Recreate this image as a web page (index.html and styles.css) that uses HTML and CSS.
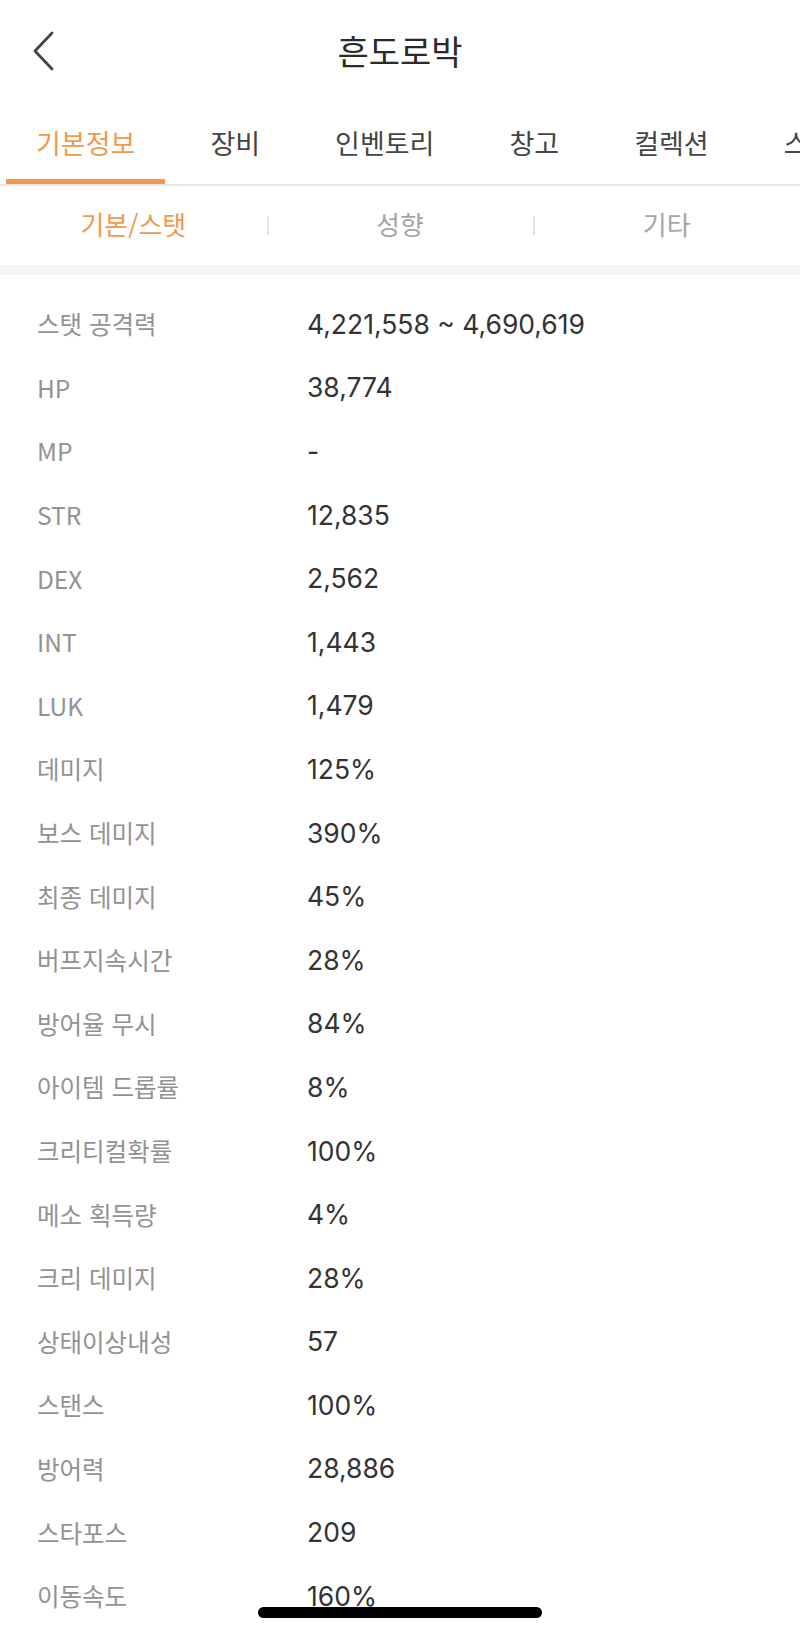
FILE: index.html
```html
<!DOCTYPE html>
<html lang="ko">
<head>
<meta charset="utf-8">
<title>흔도로박</title>
<link rel="stylesheet" href="styles.css">
</head>
<body>
<div class="page">
  <header class="topbar">
    <button class="back" aria-label="뒤로">
      <svg width="24" height="40" viewBox="0 0 24 40"><path d="M20 2 L3 20 L20 38" fill="none" stroke="#444" stroke-width="2.8" stroke-linecap="round" stroke-linejoin="round"/></svg>
    </button>
    <h1 class="title">흔도로박</h1>
  </header>

  <nav class="tabs">
    <span class="tab active">기본정보</span>
    <span class="tab">장비</span>
    <span class="tab">인벤토리</span>
    <span class="tab">창고</span>
    <span class="tab">컬렉션</span>
    <span class="tab">스킬</span>
  </nav>

  <div class="subtabs">
    <span class="subtab active">기본/스탯</span>
    <span class="subtab">성향</span>
    <span class="subtab">기타</span>
  </div>

  <div class="band"></div>

  <ul class="stats">
    <li class="row"><span class="label">스탯 공격력</span><span class="value">4,221,558 ~ 4,690,619</span></li>
    <li class="row"><span class="label">HP</span><span class="value">38,774</span></li>
    <li class="row"><span class="label">MP</span><span class="value">-</span></li>
    <li class="row"><span class="label">STR</span><span class="value">12,835</span></li>
    <li class="row"><span class="label">DEX</span><span class="value">2,562</span></li>
    <li class="row"><span class="label">INT</span><span class="value">1,443</span></li>
    <li class="row"><span class="label">LUK</span><span class="value">1,479</span></li>
    <li class="row"><span class="label">데미지</span><span class="value">125%</span></li>
    <li class="row"><span class="label">보스 데미지</span><span class="value">390%</span></li>
    <li class="row"><span class="label">최종 데미지</span><span class="value">45%</span></li>
    <li class="row"><span class="label">버프지속시간</span><span class="value">28%</span></li>
    <li class="row"><span class="label">방어율 무시</span><span class="value">84%</span></li>
    <li class="row"><span class="label">아이템 드롭률</span><span class="value">8%</span></li>
    <li class="row"><span class="label">크리티컬확률</span><span class="value">100%</span></li>
    <li class="row"><span class="label">메소 획득량</span><span class="value">4%</span></li>
    <li class="row"><span class="label">크리 데미지</span><span class="value">28%</span></li>
    <li class="row"><span class="label">상태이상내성</span><span class="value">57</span></li>
    <li class="row"><span class="label">스탠스</span><span class="value">100%</span></li>
    <li class="row"><span class="label">방어력</span><span class="value">28,886</span></li>
    <li class="row"><span class="label">스타포스</span><span class="value">209</span></li>
    <li class="row"><span class="label">이동속도</span><span class="value">160%</span></li>
  </ul>
</div>
<div class="home-indicator"></div>
</body>
</html>
```

FILE: styles.css
```css
* { box-sizing: border-box; }
html, body {
  margin: 0;
  padding: 0;
  background: #fff;
}
body {
  width: 800px;
  height: 1635px;
  overflow: hidden;
  font-family: "Inter", "Noto Sans CJK KR", sans-serif;
  color: #333;
}
.page {
  display: flex;
  flex-direction: column;
}
.topbar {
  height: 100px;
  display: flex;
  align-items: center;
  justify-content: center;
  position: relative;
}
.back {
  position: absolute;
  left: 32px;
  top: 30px;
  width: 30px;
  height: 42px;
  padding: 0;
  border: 0;
  background: none;
  display: flex;
  align-items: center;
}
.title {
  margin: 0;
  font-family: "Noto Sans CJK KR", sans-serif;
  font-weight: 400;
  font-size: 34px;
  color: #2a2a2a;
}
.tabs {
  display: flex;
  white-space: nowrap;
  overflow: hidden;
  border-bottom: 2px solid #e8e8e8;
  padding-left: 6px;
}
.tab {
  flex: none;
  padding: 8px 30px 6px;
  height: 84px;
  line-height: 70px;
  font-family: "Noto Sans CJK KR", sans-serif;
  font-size: 27px;
  color: #444;
  border-bottom: 5px solid transparent;
}
.tab + .tab { margin-left: 15px; }
.tab.active {
  color: #ef9a4e;
  border-bottom-color: #ef9a4e;
}
.subtabs {
  display: grid;
  grid-template-columns: repeat(3, 1fr);
  height: 79px;
  padding-bottom: 4px;
}
.subtab {
  position: relative;
  display: flex;
  align-items: center;
  justify-content: center;
  font-family: "Noto Sans CJK KR", sans-serif;
  font-size: 26px;
  color: #a5a5a5;
}
.subtab + .subtab::before {
  content: "";
  position: absolute;
  left: 0;
  top: 30px;
  width: 2px;
  height: 19px;
  background: #e3e3e3;
}
.subtab.active { color: #ef9a4e; }
.band {
  height: 10px;
  background: #f4f4f6;
}
.stats {
  list-style: none;
  margin: 0;
  padding: 17px 0 0 37px;
}
.row {
  display: flex;
  align-items: center;
  height: 63.6px;
}
.label {
  width: 270px;
  flex: none;
  font-family: "Noto Sans CJK KR", sans-serif;
  font-size: 24.5px;
  color: #929292;
}
.value {
  font-family: "Inter", "Noto Sans CJK KR", sans-serif;
  font-size: 26.5px;
  color: #333;
}
.home-indicator {
  position: fixed;
  left: 258px;
  bottom: 17px;
  width: 284px;
  height: 11px;
  border-radius: 6px;
  background: #000;
}
```
